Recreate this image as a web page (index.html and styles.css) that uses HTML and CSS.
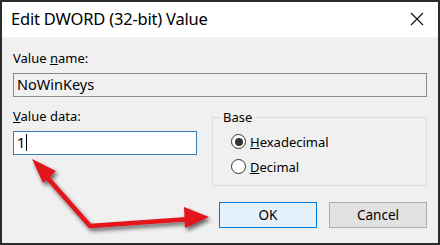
FILE: index.html
```html
<!DOCTYPE html>
<html lang="en">
<head>
    <meta charset="UTF-8">
    <title>Edit DWORD (32-bit) Value</title>
    <link rel="stylesheet" href="styles.css">
</head>
<body>
    <div class="window">
        <div class="titlebar">
            <span class="title">Edit DWORD (32-bit) Value</span>
            <svg class="close" width="14" height="14" viewBox="0 0 14 14">
                <path d="M1 1 L13 13 M13 1 L1 13" stroke="#111" stroke-width="1.2" fill="none"/>
            </svg>
        </div>

        <div class="content">
            <label class="label">Value <u>n</u>ame:</label>
            <div class="textbox disabled">NoWinKeys</div>

            <div class="row">
                <div class="data-col">
                    <label class="label"><u>V</u>alue data:</label>
                    <div class="textbox focused">1<span class="caret"></span></div>
                </div>
                <fieldset class="base">
                    <legend>Base</legend>
                    <div class="radio"><span class="dot checked"></span><span><u>H</u>exadecimal</span></div>
                    <div class="radio"><span class="dot"></span><span><u>D</u>ecimal</span></div>
                </fieldset>
            </div>

            <div class="buttons">
                <button class="btn default">OK</button>
                <button class="btn">Cancel</button>
            </div>
        </div>

        <!-- red annotation arrows -->
        <svg class="arrows" width="440" height="245" viewBox="0 0 440 245">
            <defs>
                <filter id="shadow" x="-20%" y="-20%" width="140%" height="140%">
                    <feGaussianBlur in="SourceAlpha" stdDeviation="2.2"/>
                    <feOffset dx="2" dy="3" result="blur"/>
                    <feComponentTransfer><feFuncA type="linear" slope="0.6"/></feComponentTransfer>
                    <feMerge><feMergeNode/><feMergeNode in="SourceGraphic"/></feMerge>
                </filter>
            </defs>
            <g filter="url(#shadow)" fill="#e3121a" stroke="none">
                <path d="M45 175 L90 226 L190 219" stroke="#e3121a" stroke-width="4.5" fill="none" stroke-linejoin="round"/>
                <polygon points="32,159 56,171 43,183"/>
                <polygon points="209,217 184,207 185,228"/>
            </g>
        </svg>
    </div>
</body>
</html>
```

FILE: styles.css
```css
body {
    margin: 0;
    font-family: "Noto Sans", "Open Sans", sans-serif;
    color: #000;
}
.window {
    position: relative;
    width: 440px;
    height: 245px;
    box-sizing: border-box;
    border: 2px solid #2b2b2b;
    background: #f0f0f0;
    overflow: hidden;
}
.titlebar {
    height: 35px;
    background: #fff;
    display: flex;
    align-items: center;
    justify-content: space-between;
    padding: 0 14px 0 9px;
}
.title {
    font-size: 16.5px;
    letter-spacing: -0.2px;
    margin-top: -2px;
}
.close {
    margin-top: -2px;
}
.content {
    padding: 13px 11px 0 11px;
    font-size: 13px;
}
.label {
    display: block;
    height: 23px;
    line-height: 17px;
}
.textbox {
    box-sizing: border-box;
    height: 24px;
    border: 1px solid #7a7a7a;
    padding: 0 3px;
    line-height: 21px;
    font-size: 14.5px;
}
.textbox.disabled {
    background: #f0f0f0;
    border-color: #8a8a8a;
}
.textbox.focused {
    background: #fff;
    border-color: #3d7db5;
}
.caret {
    display: inline-block;
    width: 1px;
    height: 17px;
    background: #000;
    vertical-align: -3px;
    margin-left: 1px;
}
.row {
    display: flex;
    gap: 15px;
    margin-top: 11px;
}
.data-col {
    width: 184px;
}
.base {
    flex: 1;
    margin: 0;
    height: 78px;
    box-sizing: border-box;
    border: 1px solid #dcdcdc;
    padding: 6px 0 0 18px;
    display: flex;
    flex-direction: column;
    gap: 6px;
}
.base legend {
    padding: 0 2px;
    margin-left: -10px;
    font-size: 13px;
    line-height: 18px;
}
.radio {
    display: flex;
    align-items: center;
    gap: 4px;
    font-size: 13px;
    height: 19px;
}
.dot {
    width: 13px;
    height: 13px;
    border: 1px solid #333;
    border-radius: 50%;
    background: #fff;
    display: flex;
    align-items: center;
    justify-content: center;
}
.dot.checked::after {
    content: "";
    width: 8px;
    height: 8px;
    border-radius: 50%;
    background: #333;
}
.buttons {
    display: flex;
    justify-content: flex-end;
    gap: 12px;
    margin-top: 16px;
}
.btn {
    width: 98px;
    height: 26px;
    box-sizing: border-box;
    border: 1px solid #adadad;
    background: #e1e1e1;
    font-family: inherit;
    font-size: 13.5px;
    padding: 0;
    color: #000;
}
.btn.default {
    border-color: #0078d7;
    background: #e5f1fb;
}
.arrows {
    position: absolute;
    left: -2px;
    top: -2px;
}
```
